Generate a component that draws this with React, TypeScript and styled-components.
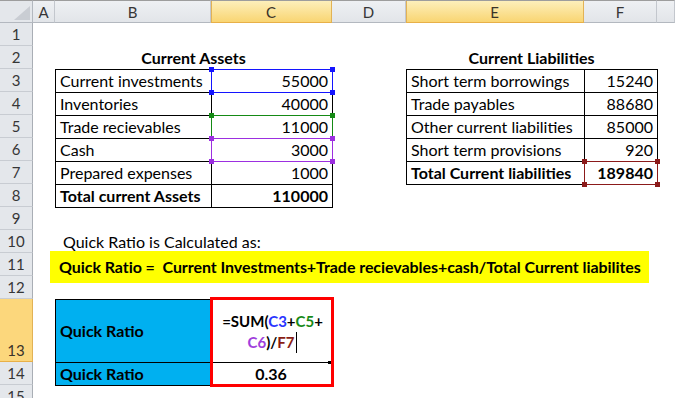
import React from 'react';
import styled, { createGlobalStyle, css } from 'styled-components';

const FONT = `Lato, "Open Sans", "Noto Sans", sans-serif`;

const GlobalStyle = createGlobalStyle`
  html, body { margin: 0; padding: 0; background: #ffffff; }
  body { width: 675px; height: 398px; overflow: hidden; font-family: ${FONT}; }
  *, *::before, *::after { box-sizing: border-box; }
`;

type Place = { $c: number; $r: number; $cs?: number; $rs?: number };

const place = css<Place>`
  grid-column: ${(p) => p.$c} / span ${(p) => p.$cs ?? 1};
  grid-row: ${(p) => p.$r} / span ${(p) => p.$rs ?? 1};
`;

const Sheet = styled.div`
  display: grid;
  grid-template-columns: 33px 22px 156px 121px 74px 178px 73px 18px;
  grid-template-rows: 23px repeat(12, 23px) 63px 23px 23px;
  width: 675px;
  height: 398px;
  overflow: hidden;
  font-family: ${FONT};
  font-size: 16px;
  color: #000;
  background: #fff;
`;

const Corner = styled.div`
  grid-column: 1;
  grid-row: 1;
  background: #e4e7eb;
  border-top: 1px solid #9d9d9d;
  border-right: 1px solid #b3b8bf;
  border-bottom: 1px solid #b3b8bf;
  display: flex;
  align-items: flex-end;
  justify-content: flex-end;
  padding: 0 2px 2px 0;
`;

const ColHeader = styled.div<{ $c: number; $active?: boolean }>`
  grid-column: ${(p) => p.$c};
  grid-row: 1;
  display: flex;
  align-items: center;
  justify-content: center;
  font-size: 15px;
  color: #363636;
  border-top: 1px solid #9d9d9d;
  border-right: 1px solid #c3c7cd;
  border-bottom: 1px solid #b3b8bf;
  background: linear-gradient(#eef0f3, #e2e5e9);
  ${(p) =>
    p.$active &&
    css`
      background: linear-gradient(#fdefbb, #f9d572);
      border-right-color: #e2b255;
      border-bottom-color: #e8b048;
      box-shadow: inset 1px 0 0 #e2b255;
      color: #3a3329;
    `}
`;

const RowHeader = styled.div<{ $r: number; $active?: boolean }>`
  grid-column: 1;
  grid-row: ${(p) => p.$r};
  display: flex;
  align-items: flex-end;
  justify-content: center;
  padding-bottom: 2px;
  font-size: 15px;
  line-height: 18px;
  color: #363636;
  background: #e4e7eb;
  border-right: 1px solid #a9aeb5;
  border-bottom: 1px solid #c8ccd2;
  ${(p) =>
    p.$active &&
    css`
      background: #fcd77c;
      border-bottom-color: #e8b048;
      border-right-color: #e2b255;
      color: #3a3329;
    `}
`;

const Title = styled.div<Place>`
  ${place};
  font-weight: 700;
  text-align: center;
  line-height: 23px;
`;

const TableCell = styled.div<Place & { $num?: boolean; $bold?: boolean; $fill?: string }>`
  ${place};
  position: relative;
  margin: 0 -1px -1px 0;
  border: 1px solid #000;
  padding: 0 4px;
  display: flex;
  align-items: center;
  justify-content: ${(p) => (p.$num ? 'flex-end' : 'flex-start')};
  line-height: 22px;
  white-space: nowrap;
  font-weight: ${(p) => (p.$bold ? 700 : 400)};
  background: ${(p) => p.$fill ?? 'transparent'};
`;

const Highlight = styled.span<{ $color: string }>`
  position: absolute;
  inset: -1px -1px -1px -1px;
  border: 1px solid ${(p) => p.$color};
  z-index: 1;
  pointer-events: none;
`;

const Handle = styled.i<{ $color: string; $v: 'top' | 'bottom'; $h: 'left' | 'right' }>`
  position: absolute;
  width: 5px;
  height: 5px;
  background: ${(p) => p.$color};
  ${(p) => p.$v}: -3px;
  ${(p) => p.$h}: -3px;
`;

const Note = styled.div<Place>`
  ${place};
  padding-left: 8px;
  line-height: 23px;
  white-space: nowrap;
`;

const Banner = styled.div<Place>`
  ${place};
  margin: -2px 8px -7px 17px;
  background: #ffff00;
  font-weight: 700;
  letter-spacing: -0.06px;
  display: flex;
  align-items: center;
  padding: 0 0 2px 9px;
  white-space: pre;
  z-index: 1;
`;

const EditBox = styled.div<Place>`
  ${place};
  margin: -2px -2px -2px -1px;
  border: 3px solid #ff0000;
  background: #fff;
  display: flex;
  flex-direction: column;
  position: relative;
  z-index: 2;
`;

const FormulaArea = styled.div`
  flex: 1;
  display: flex;
  flex-direction: column;
  align-items: center;
  justify-content: center;
  font-weight: 700;
  font-size: 15px;
  line-height: 21px;
  padding: 1px 0 0 1px;
`;

const FormulaLine = styled.div`
  white-space: nowrap;
`;

const Ref = styled.span<{ $color: string }>`
  color: ${(p) => p.$color};
`;

const Caret = styled.span`
  display: inline-block;
  width: 1px;
  height: 21px;
  background: #000;
  margin-left: 2px;
  vertical-align: -5px;
`;

const ValueArea = styled.div`
  height: 22px;
  margin-right: 2px;
  border-top: 1px solid #000;
  font-weight: 700;
  text-align: center;
  line-height: 21px;
  position: relative;
  &::after {
    content: '';
    position: absolute;
    right: -2px;
    top: -2px;
    width: 3px;
    height: 3px;
    background: #000;
  }
`;

const HL = {
  blue: '#1414ff',
  green: '#158a15',
  purple: '#9c2fe0',
  red: '#8b1a1a',
};

const FX = {
  blue: '#2a35ff',
  green: '#178a17',
  purple: '#a040dc',
  red: '#8a1d14',
};

type Row = { label: string; value: string; hl?: string; bold?: boolean };

const assets: Row[] = [
  { label: 'Current investments', value: '55000', hl: HL.blue },
  { label: 'Inventories', value: '40000' },
  { label: 'Trade recievables', value: '11000', hl: HL.green },
  { label: 'Cash', value: '3000', hl: HL.purple },
  { label: 'Prepared expenses', value: '1000' },
  { label: 'Total current Assets', value: '110000', bold: true },
];

const liabilities: Row[] = [
  { label: 'Short term borrowings', value: '15240' },
  { label: 'Trade payables', value: '88680' },
  { label: 'Other current liabilities', value: '85000' },
  { label: 'Short term provisions', value: '920' },
  { label: 'Total Current liabilities', value: '189840', bold: true, hl: HL.red },
];

const columns = ['A', 'B', 'C', 'D', 'E', 'F', ''];
const activeCols = ['C', 'E'];
const rowNumbers = Array.from({ length: 15 }, (_, i) => i + 1);

// sheet row n sits in grid row n + 1; column A is grid column 2
const R = (n: number) => n + 1;
const COL = { A: 2, B: 3, C: 4, D: 5, E: 6, F: 7 };

const Marker: React.FC<{ color: string }> = ({ color }) => (
  <Highlight $color={color}>
    <Handle $color={color} $v="top" $h="left" />
    <Handle $color={color} $v="top" $h="right" />
    <Handle $color={color} $v="bottom" $h="left" />
    <Handle $color={color} $v="bottom" $h="right" />
  </Highlight>
);

const DataTable: React.FC<{ rows: Row[]; col: number; start: number }> = ({ rows, col, start }) => (
  <>
    {rows.map((row, i) => (
      <React.Fragment key={row.label}>
        <TableCell $c={col} $r={R(start + i)} $bold={row.bold}>
          {row.label}
        </TableCell>
        <TableCell $c={col + 1} $r={R(start + i)} $num $bold={row.bold}>
          {row.value}
          {row.hl && <Marker color={row.hl} />}
        </TableCell>
      </React.Fragment>
    ))}
  </>
);

export default function App() {
  return (
    <>
      <GlobalStyle />
      <Sheet>
        <Corner>
          <svg width="16" height="14" viewBox="0 0 16 14">
            <polygon points="16,0 16,14 0,14" fill="#c9cdd3" />
          </svg>
        </Corner>
        {columns.map((c, i) => (
          <ColHeader key={i} $c={i + 2} $active={activeCols.includes(c)}>
            {c}
          </ColHeader>
        ))}
        {rowNumbers.map((n) => (
          <RowHeader key={n} $r={R(n)} $active={n === 13}>
            {n}
          </RowHeader>
        ))}

        <Title $c={COL.B} $cs={2} $r={R(2)}>Current Assets</Title>
        <Title $c={COL.E} $cs={2} $r={R(2)}>Current Liabilities</Title>

        <DataTable rows={assets} col={COL.B} start={3} />
        <DataTable rows={liabilities} col={COL.E} start={3} />

        <Note $c={COL.B} $cs={3} $r={R(10)}>Quick Ratio is Calculated as:</Note>
        <Banner $c={COL.A} $cs={6} $r={R(11)}>
          {'Quick Ratio =  Current Investments+Trade recievables+cash/Total Current liabilites'}
        </Banner>

        <TableCell $c={COL.B} $r={R(13)} $bold $fill="#00b0f0">Quick Ratio</TableCell>
        <TableCell $c={COL.B} $r={R(14)} $bold $fill="#00b0f0">Quick Ratio</TableCell>

        <EditBox $c={COL.C} $r={R(13)} $rs={2}>
          <FormulaArea>
            <FormulaLine>
              =SUM(<Ref $color={FX.blue}>C3</Ref>+<Ref $color={FX.green}>C5</Ref>+
            </FormulaLine>
            <FormulaLine>
              <Ref $color={FX.purple}>C6</Ref>)/<Ref $color={FX.red}>F7</Ref>
              <Caret />
            </FormulaLine>
          </FormulaArea>
          <ValueArea>0.36</ValueArea>
        </EditBox>
      </Sheet>
    </>
  );
}
